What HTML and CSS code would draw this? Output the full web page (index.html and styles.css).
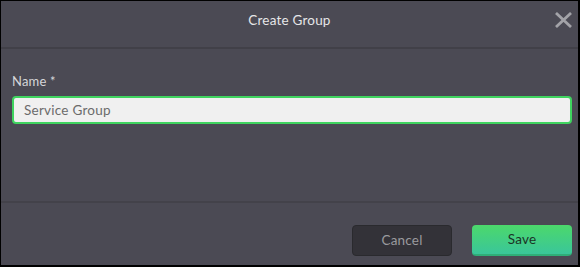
FILE: index.html
```html
<!DOCTYPE html>
<html>
<head>
<meta charset="utf-8">
<link rel="stylesheet" href="styles.css">
</head>
<body>
<div class="dialog">
  <div class="header">
    <div class="title">Create Group</div>
    <button class="close" aria-label="Close">
      <svg width="17" height="16" viewBox="0 0 17 16"><path d="M1 1 L16 15 M16 1 L1 15" stroke="#a3a3a8" stroke-width="2.8" stroke-linecap="butt" fill="none"/></svg>
    </button>
  </div>
  <div class="body">
    <label class="label">Name *</label>
    <div class="input">Service Group</div>
  </div>
  <div class="footer">
    <button class="btn cancel">Cancel</button>
    <button class="btn save">Save</button>
  </div>
</div>
</body>
</html>
```
FILE: styles.css
```css
html, body {
  margin: 0;
  padding: 0;
  background: #000;
  width: 580px;
  height: 267px;
  overflow: hidden;
}
body {
  padding: 1px 2px 2px 1px;
  box-sizing: border-box;
  font-family: Lato, "Liberation Sans", sans-serif;
}
.dialog {
  width: 577px;
  height: 264px;
  background: #4b4a54;
  display: flex;
  flex-direction: column;
}
.header {
  height: 46px;
  border-bottom: 2px solid #414048;
  display: flex;
  align-items: center;
  justify-content: center;
  position: relative;
}
.title {
  color: #e6e6e8;
  font-size: 13.5px;
  letter-spacing: 0.2px;
  margin-top: -8px;
}
.close {
  position: absolute;
  right: 6px;
  top: 11px;
  background: none;
  border: none;
  padding: 0;
  width: 17px;
  height: 16px;
}
.close svg { display: block; }
.body {
  height: 154px;
  border-bottom: 2px solid #43424a;
  padding: 24px 6px 0 11px;
  box-sizing: border-box;
}
.label {
  display: block;
  color: #d6d6d9;
  font-size: 13px;
  letter-spacing: 0.2px;
  line-height: 16px;
  margin-bottom: 7px;
}
.input {
  height: 28px;
  box-sizing: border-box;
  border: 2px solid #3fd45f;
  border-radius: 4px;
  background: #f0f0f0;
  color: #6b6b6b;
  font-size: 13.5px;
  letter-spacing: 0.25px;
  line-height: 24px;
  padding-left: 10px;
}
.footer {
  display: flex;
  justify-content: flex-end;
  gap: 20px;
  padding: 22px 6px 0 0;
}
.btn {
  width: 100px;
  height: 31px;
  border-radius: 4px;
  font-family: Lato, "Liberation Sans", sans-serif;
  font-size: 13.5px;
  letter-spacing: 0.2px;
  padding: 0 0 2px;
}
.cancel {
  background: #333238;
  border: 1px solid #2a2a2e;
  color: #9a9a9e;
}
.save {
  background: linear-gradient(#4cd86b, #3ac69a);
  border: none;
  border-bottom: 2px solid #2fae78;
  color: #1c3326;
}
```
